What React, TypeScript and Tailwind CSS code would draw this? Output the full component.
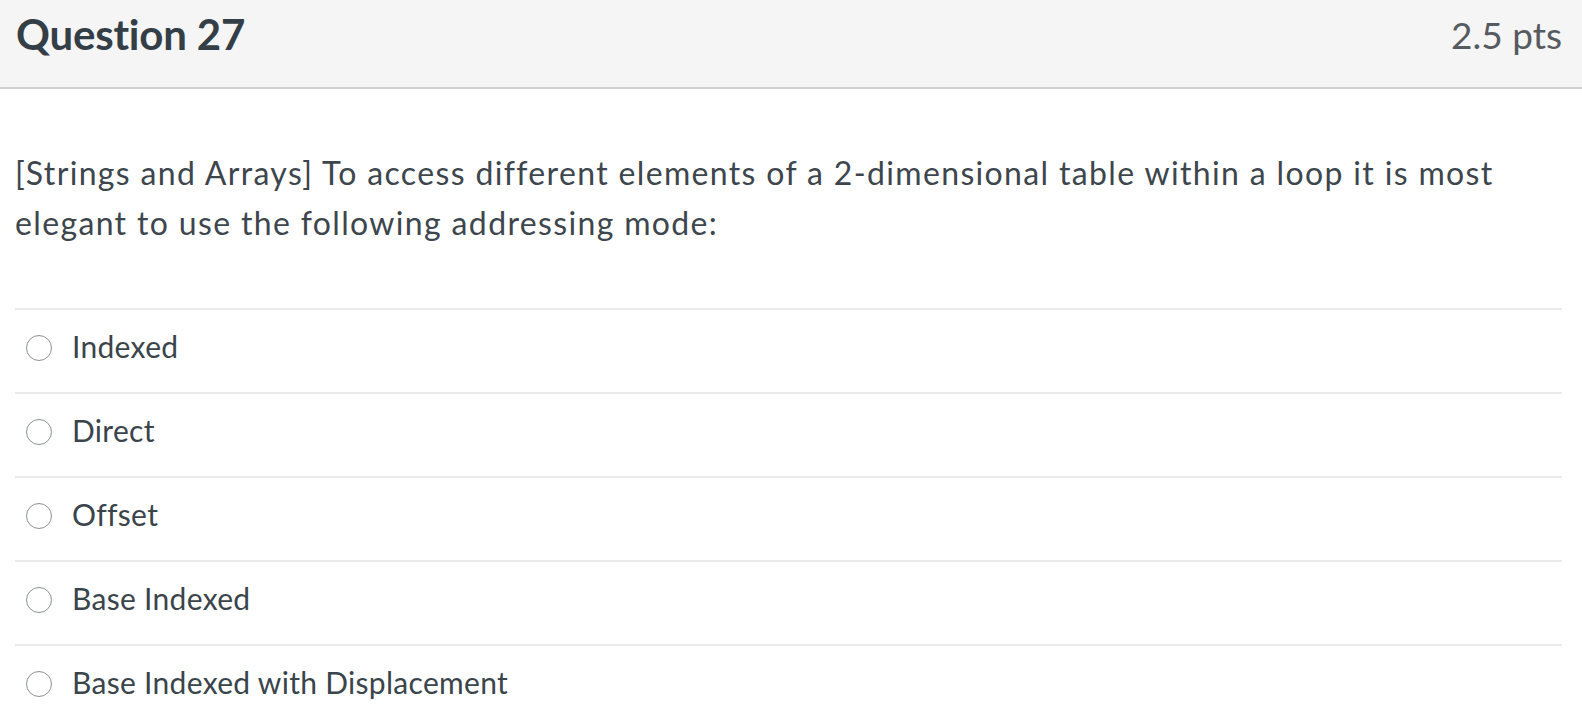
import React from "react";

const options = [
  "Indexed",
  "Direct",
  "Offset",
  "Base Indexed",
  "Base Indexed with Displacement",
];

export default function App() {
  return (
    <div
      className="w-[1582px] h-[726px] overflow-hidden bg-white text-[#2d3b45]"
      style={{ fontFamily: "Lato, 'Open Sans', sans-serif" }}
    >
      <div className="h-[89px] bg-[#f5f5f5] border-b-2 border-[#cdd1d4] flex items-center justify-between pl-[16px] pr-[20px] pb-[19px]">
        <div className="text-[42px] font-bold leading-none tracking-[-0.2px] text-[#343e46]">Question 27</div>
        <div className="text-[37px] leading-none text-[#555b60]">2.5 pts</div>
      </div>
      <div className="pl-[15px] pr-[20px]">
        <div className="pt-[59px] text-[32px] leading-[50px] tracking-[1.35px] text-[#3d464d] pr-[40px]">
          [Strings and Arrays] To access different elements of a 2-dimensional table within a loop it is most elegant to use the following addressing mode:
        </div>
        <div className="mt-[60px]">
          {options.map((o) => (
            <div
              key={o}
              className="h-[84px] border-t-2 border-[#e9eaeb] flex items-center pl-[11px] pb-[6px]"
            >
              <span className="w-[26px] h-[26px] rounded-full border-[1.5px] border-[#8e9294] bg-white shrink-0" />
              <span className="ml-[20px] text-[30px] leading-none tracking-[0.3px] text-[#3a444b] pb-[5px]">{o}</span>
            </div>
          ))}
        </div>
      </div>
    </div>
  );
}
